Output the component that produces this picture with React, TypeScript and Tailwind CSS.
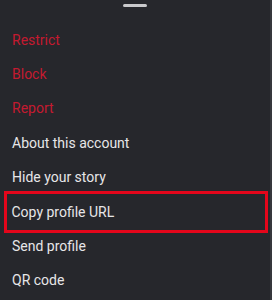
import React from "react";

const items: { label: string; danger?: boolean; highlight?: boolean }[] = [
  { label: "Restrict", danger: true },
  { label: "Block", danger: true },
  { label: "Report", danger: true },
  { label: "About this account" },
  { label: "Hide your story" },
  { label: "Copy profile URL", highlight: true },
  { label: "Send profile" },
  { label: "QR code" },
];

export default function App(): React.JSX.Element {
  return (
    <div
      className="w-[272px] h-[300px] overflow-hidden bg-[#26272c] flex"
      style={{ fontFamily: "Roboto, 'Noto Sans', sans-serif" }}
    >
      <div className="flex-1 flex flex-col">
        <div className="flex justify-center pt-[4px] h-[23px]">
          <div className="w-[24px] h-[3px] rounded-full bg-[#c9c9cc]" />
        </div>
        <ul className="flex flex-col">
          {items.map((item) => (
            <li
              key={item.label}
              className={
                item.highlight
                  ? "ml-[4px] mr-[2px] -my-[4px] h-[42.4px] border-[3.5px] border-[#e4061b] pl-[4.5px] pt-[1px] flex items-center text-[14px] text-[#e6e6e8] z-10"
                  : item.danger
                    ? "h-[34.4px] px-[12px] flex items-center text-[14px] text-[#c41a30]"
                    : "h-[34.4px] px-[12px] flex items-center text-[14px] text-[#e6e6e8]"
              }
            >
              {item.label}
            </li>
          ))}
        </ul>
      </div>
      <div className="w-[2px] bg-[#36373c]" />
    </div>
  );
}
